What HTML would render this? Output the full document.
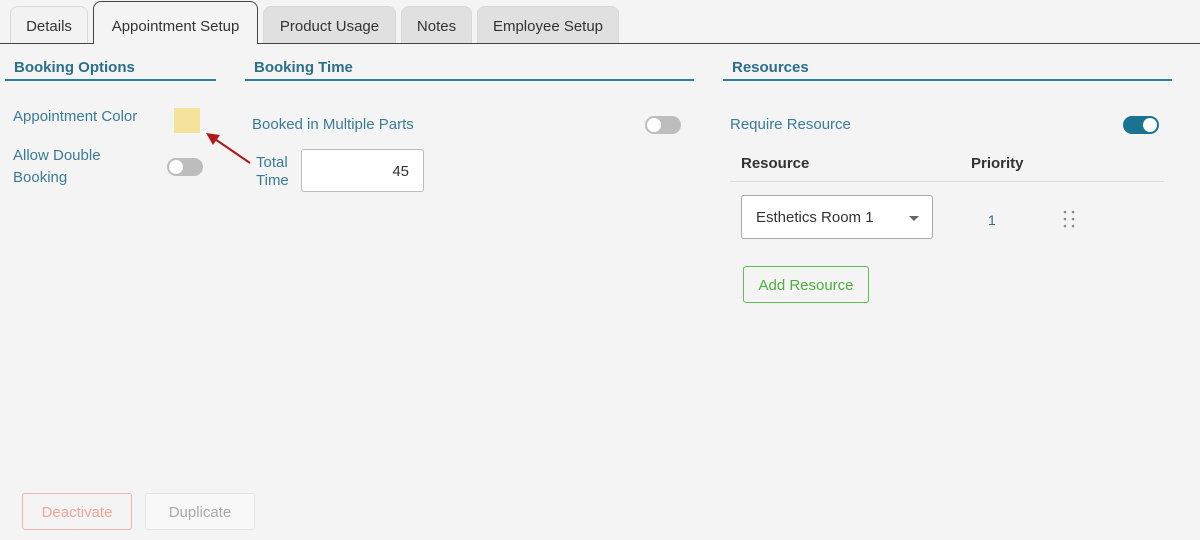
<!DOCTYPE html>
<html><head><style>
body{margin:0;width:1200px;height:540px;background:#f4f4f4;font-family:"Liberation Sans",sans-serif;position:relative;overflow:hidden}
.a{position:absolute}
.tab{position:absolute;top:6px;height:37px;background:#e0e0e0;border:1px solid #d8d8d8;border-bottom:none;border-radius:8px 8px 0 0;font-size:15px;color:#333;box-sizing:border-box;text-align:center;line-height:39px}
.h{position:absolute;font-weight:bold;font-size:15px;color:#2a6f8c;border-bottom:2px solid #2a80a0;padding-bottom:1px;height:19px;padding-top:1px}
.lbl{position:absolute;font-size:15px;color:#3a7c96}
.tg{position:absolute;width:36px;height:18px;border-radius:9px;background:#bdbdbd}
.tg::after{content:"";position:absolute;left:2px;top:2px;width:14px;height:14px;border-radius:50%;background:#fff}
.tg.on{background:#1a7391}.tg.on::after{left:20px}
</style></head><body>
<div class="a" style="left:0;right:0;top:43px;border-top:1px solid #444"></div>
<div class="tab" style="left:10px;width:78px;background:#f2f2f2">Details</div>
<div class="tab" style="left:93px;width:165px;background:#f4f4f4;border:1px solid #444;border-bottom:none;height:43px;top:1px;line-height:49px;z-index:2">Appointment Setup</div>
<div class="tab" style="left:263px;width:133px">Product Usage</div>
<div class="tab" style="left:401px;width:71px">Notes</div>
<div class="tab" style="left:477px;width:142px">Employee Setup</div>

<div class="h" style="left:5px;top:58px;padding-left:9px;width:202px">Booking Options</div>
<div class="h" style="left:245px;top:58px;width:440px;padding-left:9px">Booking Time</div>
<div class="h" style="left:723px;top:58px;width:440px;padding-left:9px">Resources</div>

<div class="lbl" style="left:13px;top:108px">Appointment Color</div>
<div class="a" style="left:174px;top:108px;width:26px;height:25px;background:#f5e39c"></div>
<div class="lbl" style="left:13px;top:145px;line-height:22px">Allow Double<br>Booking</div>
<div class="tg" style="left:167px;top:158px"></div>
<svg class="a" style="left:200px;top:125px" width="55" height="45"><line x1="50" y1="38" x2="12" y2="12" stroke="#b01818" stroke-width="2"/><polygon points="6,8 20,10 13,20" fill="#b01818"/></svg>

<div class="lbl" style="left:252px;top:116px">Booked in Multiple Parts</div>
<div class="tg" style="left:645px;top:116px"></div>
<div class="lbl" style="left:256px;top:154px;line-height:18px">Total<br>Time</div>
<div class="a" style="left:301px;top:149px;width:123px;height:43px;background:#fff;border:1px solid #bbb;border-radius:3px;box-sizing:border-box;text-align:right;padding-right:14px;line-height:43px;font-size:15px;color:#333">45</div>

<div class="lbl" style="left:730px;top:116px">Require Resource</div>
<div class="tg on" style="left:1123px;top:116px"></div>
<div class="a" style="left:741px;top:155px;font-weight:bold;font-size:15px;color:#333">Resource</div>
<div class="a" style="left:971px;top:155px;font-weight:bold;font-size:15px;color:#333">Priority</div>
<div class="a" style="left:730px;top:181px;width:434px;border-top:1px solid #ddd"></div>
<div class="a" style="left:741px;top:195px;width:192px;height:44px;background:#fff;border:1px solid #aaa;border-radius:3px;box-sizing:border-box;padding-left:14px;line-height:43px;font-size:15px;color:#333">Esthetics Room 1<span class="a" style="right:13px;top:20px;border:5px solid transparent;border-top-color:#666;border-bottom:none"></span></div>
<div class="a" style="left:988px;top:212px;font-size:14px;color:#2a6f8c">1</div>
<svg class="a" style="left:1063px;top:210px" width="14" height="20" fill="#888"><circle cx="2" cy="2" r="1.3"/><circle cx="10" cy="2" r="1.3"/><circle cx="2" cy="9" r="1.3"/><circle cx="10" cy="9" r="1.3"/><circle cx="2" cy="16" r="1.3"/><circle cx="10" cy="16" r="1.3"/></svg>
<div class="a" style="left:743px;top:266px;width:126px;height:37px;border:1px solid #5cc24e;border-radius:3px;box-sizing:border-box;text-align:center;line-height:37px;font-size:15px;color:#4caf3e">Add Resource</div>

<div class="a" style="left:22px;top:493px;width:110px;height:37px;border:1px solid #f0b5a8;border-radius:3px;box-sizing:border-box;text-align:center;line-height:37px;font-size:15px;color:#f0a595">Deactivate</div>
<div class="a" style="left:145px;top:493px;width:110px;height:37px;border:1px solid #e6e6e6;background:#f8f8f8;border-radius:3px;box-sizing:border-box;text-align:center;line-height:37px;font-size:15px;color:#aaa">Duplicate</div>
</body></html>
